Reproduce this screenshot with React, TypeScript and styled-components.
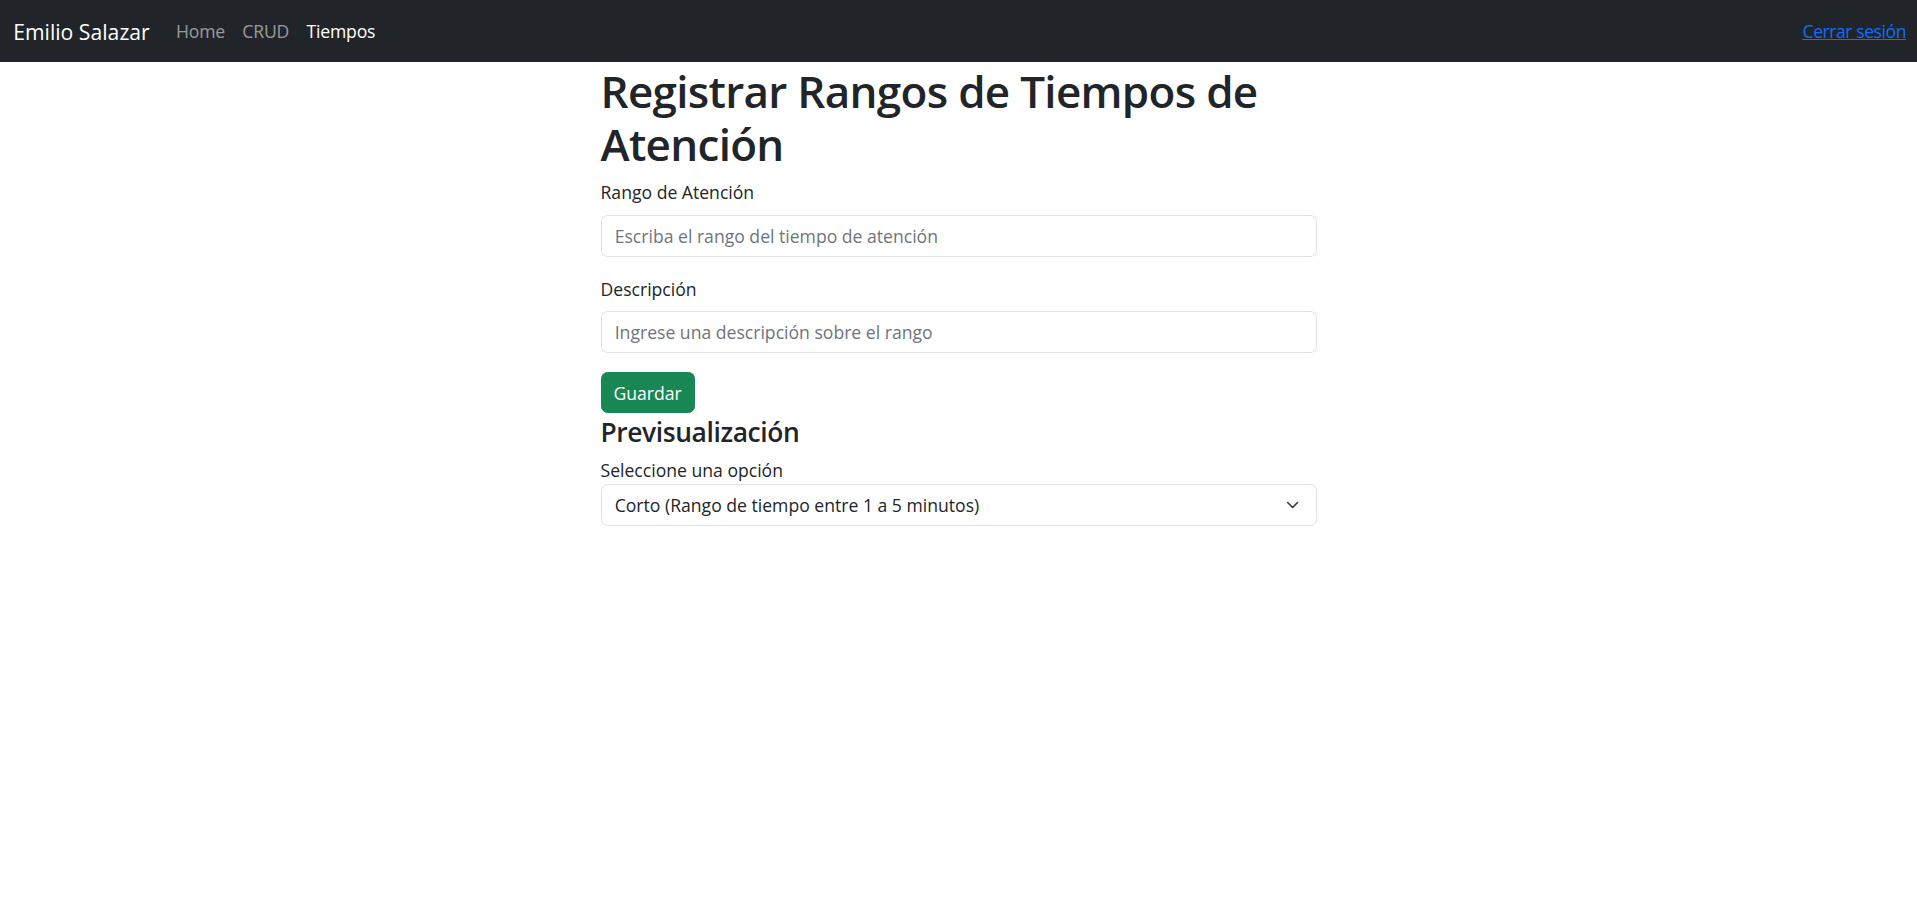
import React, { useState } from 'react';
import styled, { createGlobalStyle } from 'styled-components';

const GlobalStyle = createGlobalStyle`
  * { box-sizing: border-box; }
  body {
    margin: 0;
    background: #fff;
    color: #212529;
    font-family: "Open Sans", "Noto Sans", sans-serif;
    font-size: 17.6px;
    line-height: 1.5;
  }
`;

interface NavItem {
  label: string;
  active?: boolean;
}

const navItems: NavItem[] = [
  { label: 'Home' },
  { label: 'CRUD' },
  { label: 'Tiempos', active: true },
];

const opciones = [
  'Corto (Rango de tiempo entre 1 a 5 minutos)',
  'Medio (Rango de tiempo entre 5 a 15 minutos)',
  'Largo (Rango de tiempo mayor a 15 minutos)',
];

const Chevron = () => (
  <ChevronIcon viewBox="0 0 16 16" aria-hidden="true">
    <path
      d="M2 5l6 6 6-6"
      fill="none"
      stroke="#343a40"
      strokeWidth="2"
      strokeLinecap="round"
      strokeLinejoin="round"
    />
  </ChevronIcon>
);

const App: React.FC = () => {
  const [rango, setRango] = useState('');
  const [descripcion, setDescripcion] = useState('');
  const [opcion, setOpcion] = useState(opciones[0]);

  return (
    <>
      <GlobalStyle />
      <Navbar>
        <Brand href="#">Emilio Salazar</Brand>
        <NavList>
          {navItems.map((item) => (
            <NavLink key={item.label} href="#" $active={item.active}>
              {item.label}
            </NavLink>
          ))}
        </NavList>
        <Logout href="#">Cerrar sesión</Logout>
      </Navbar>

      <Main>
        <Title>Registrar Rangos de Tiempos de Atención</Title>
        <form onSubmit={(e) => e.preventDefault()}>
          <FormGroup>
            <Label htmlFor="rango">Rango de Atención</Label>
            <Input
              id="rango"
              placeholder="Escriba el rango del tiempo de atención"
              value={rango}
              onChange={(e) => setRango(e.target.value)}
            />
          </FormGroup>
          <FormGroup>
            <Label htmlFor="descripcion">Descripción</Label>
            <Input
              id="descripcion"
              placeholder="Ingrese una descripción sobre el rango"
              value={descripcion}
              onChange={(e) => setDescripcion(e.target.value)}
            />
          </FormGroup>
          <SuccessButton type="submit">Guardar</SuccessButton>
        </form>

        <Subtitle>Previsualización</Subtitle>
        <SelectLabel htmlFor="opcion">Seleccione una opción</SelectLabel>
        <SelectWrap>
          <Select
            id="opcion"
            value={opcion}
            onChange={(e) => setOpcion(e.target.value)}
          >
            {opciones.map((o) => (
              <option key={o} value={o}>
                {o}
              </option>
            ))}
          </Select>
          <Chevron />
        </SelectWrap>
      </Main>
    </>
  );
};

export default App;

// Styling
const Navbar = styled.nav`
  height: 62px;
  background: #212529;
  display: flex;
  align-items: center;
  padding: 0 11px 0 13.2px;
`;

const Brand = styled.a`
  font-size: 21.2px;
  line-height: 33px;
  color: #fff;
  text-decoration: none;
  margin-right: 17.6px;
`;

const NavList = styled.div`
  display: flex;
  align-items: center;
  flex: 1;
`;

const NavLink = styled.a<{ $active?: boolean }>`
  font-size: 17.6px;
  line-height: 26.4px;
  padding: 0 8.6px;
  letter-spacing: -0.15px;
  text-decoration: none;
  color: ${(p) => (p.$active ? '#fff' : 'rgba(255, 255, 255, 0.55)')};
`;

const Logout = styled.a`
  font-size: 17.6px;
  line-height: 26.4px;
  letter-spacing: -0.45px;
  color: #0d6efd;
  text-decoration: underline;
`;

const Main = styled.main`
  width: 716px;
  margin: 0 auto;
  padding-top: 3px;
`;

const Title = styled.h1`
  font-size: 44px;
  font-weight: 600;
  line-height: 1.2;
  letter-spacing: -0.7px;
  margin: 0 0 8.8px;
  width: 680px;
`;

const FormGroup = styled.div`
  margin-bottom: 18.5px;
`;

const Label = styled.label`
  display: block;
  margin-bottom: 8.8px;
`;

const Input = styled.input`
  display: block;
  width: 100%;
  height: 42.6px;
  padding: 0 13.2px;
  font: inherit;
  color: #212529;
  background: #fff;
  border: 1px solid #dee2e6;
  border-radius: 6.6px;
  outline: none;

  &::placeholder {
    color: #6c757d;
  }
`;

const SuccessButton = styled.button`
  height: 41.5px;
  padding: 0 12px;
  font: inherit;
  color: #fff;
  background: #198754;
  border: 1px solid #198754;
  border-radius: 6.6px;
  cursor: pointer;
`;

const Subtitle = styled.h4`
  font-size: 26.4px;
  font-weight: 600;
  line-height: 1.2;
  letter-spacing: -0.4px;
  margin: 3.3px 0 8.8px;
`;

const SelectLabel = styled.label`
  display: block;
  margin-bottom: 0.5px;
`;

const SelectWrap = styled.div`
  position: relative;
`;

const Select = styled.select`
  display: block;
  width: 100%;
  height: 41.5px;
  padding: 0 40px 0 13.2px;
  font: inherit;
  color: #212529;
  background: #fff;
  border: 1px solid #dee2e6;
  border-radius: 6.6px;
  appearance: none;
  outline: none;
`;

const ChevronIcon = styled.svg`
  position: absolute;
  right: 17px;
  top: 50%;
  width: 13.2px;
  height: 13.2px;
  transform: translateY(-50%);
  pointer-events: none;
`;
